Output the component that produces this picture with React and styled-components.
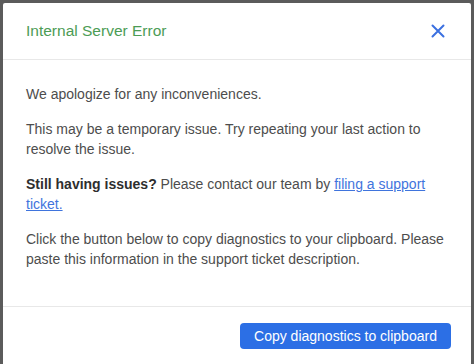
import styled, { createGlobalStyle } from "styled-components";

const GlobalStyle = createGlobalStyle`
  html, body {
    margin: 0;
    padding: 0;
    background: #5b5b5b;
    font-family: "Liberation Sans", Arial, sans-serif;
  }
`;

const Frame = styled.div`
  width: 474px;
  height: 364px;
  overflow: hidden;
  padding: 3px 3px 0 3px;
  box-sizing: border-box;
`;

const Modal = styled.div`
  background: #ffffff;
  height: 100%;
  display: flex;
  flex-direction: column;
  border-radius: 2px 2px 0 0;
`;

const Header = styled.header`
  height: 57px;
  flex-shrink: 0;
  display: flex;
  align-items: center;
  justify-content: space-between;
  padding: 0 26px 0 23px;
  border-bottom: 1px solid #e8e8e8;
  box-sizing: border-box;
`;

const Title = styled.h2`
  margin: 0;
  font-size: 15.5px;
  font-weight: normal;
  color: #4c9c55;
`;

const CloseButton = styled.button`
  border: 0;
  background: none;
  padding: 0;
  width: 14px;
  height: 14px;
  display: flex;
  cursor: pointer;
`;

const Body = styled.section`
  padding: 24px 20px 0 23px;
  height: 247px;
  flex-shrink: 0;
  box-sizing: border-box;
  border-bottom: 1px solid #e8e8e8;
`;

const Paragraph = styled.p`
  margin: 0 0 15px;
  font-size: 14px;
  line-height: 20px;
  color: #4d4d4d;

  strong {
    color: #2e2e2e;
  }
`;

const Link = styled.a`
  color: #3f74dd;
  text-decoration: underline;
`;

const Footer = styled.footer`
  display: flex;
  justify-content: flex-end;
  padding: 16px 20px 0;
`;

const PrimaryButton = styled.button`
  background: #2c6fe5;
  color: #fff;
  border: 0;
  border-radius: 4px;
  height: 26px;
  width: 211px;
  padding: 0;
  font-family: "Liberation Sans", Arial, sans-serif;
  font-size: 14px;
  cursor: pointer;
`;

function CloseIcon() {
  return (
    <svg width="14" height="14" viewBox="0 0 14 14">
      <path
        d="M1.5 1.5 L12.5 12.5 M12.5 1.5 L1.5 12.5"
        stroke="#3b70e0"
        strokeWidth="2"
        strokeLinecap="round"
      />
    </svg>
  );
}

export default function App() {
  return (
    <>
      <GlobalStyle />
      <Frame>
        <Modal>
          <Header>
            <Title>Internal Server Error</Title>
            <CloseButton aria-label="Close">
              <CloseIcon />
            </CloseButton>
          </Header>
          <Body>
            <Paragraph>We apologize for any inconveniences.</Paragraph>
            <Paragraph>
              This may be a temporary issue. Try repeating your last action to
              resolve the issue.
            </Paragraph>
            <Paragraph>
              <strong>Still having issues?</strong> Please contact our team by{" "}
              <Link href="#">filing a support ticket.</Link>
            </Paragraph>
            <Paragraph>
              Click the button below to copy diagnostics to your clipboard.
              Please paste this information in the support ticket description.
            </Paragraph>
          </Body>
          <Footer>
            <PrimaryButton>Copy diagnostics to clipboard</PrimaryButton>
          </Footer>
        </Modal>
      </Frame>
    </>
  );
}
